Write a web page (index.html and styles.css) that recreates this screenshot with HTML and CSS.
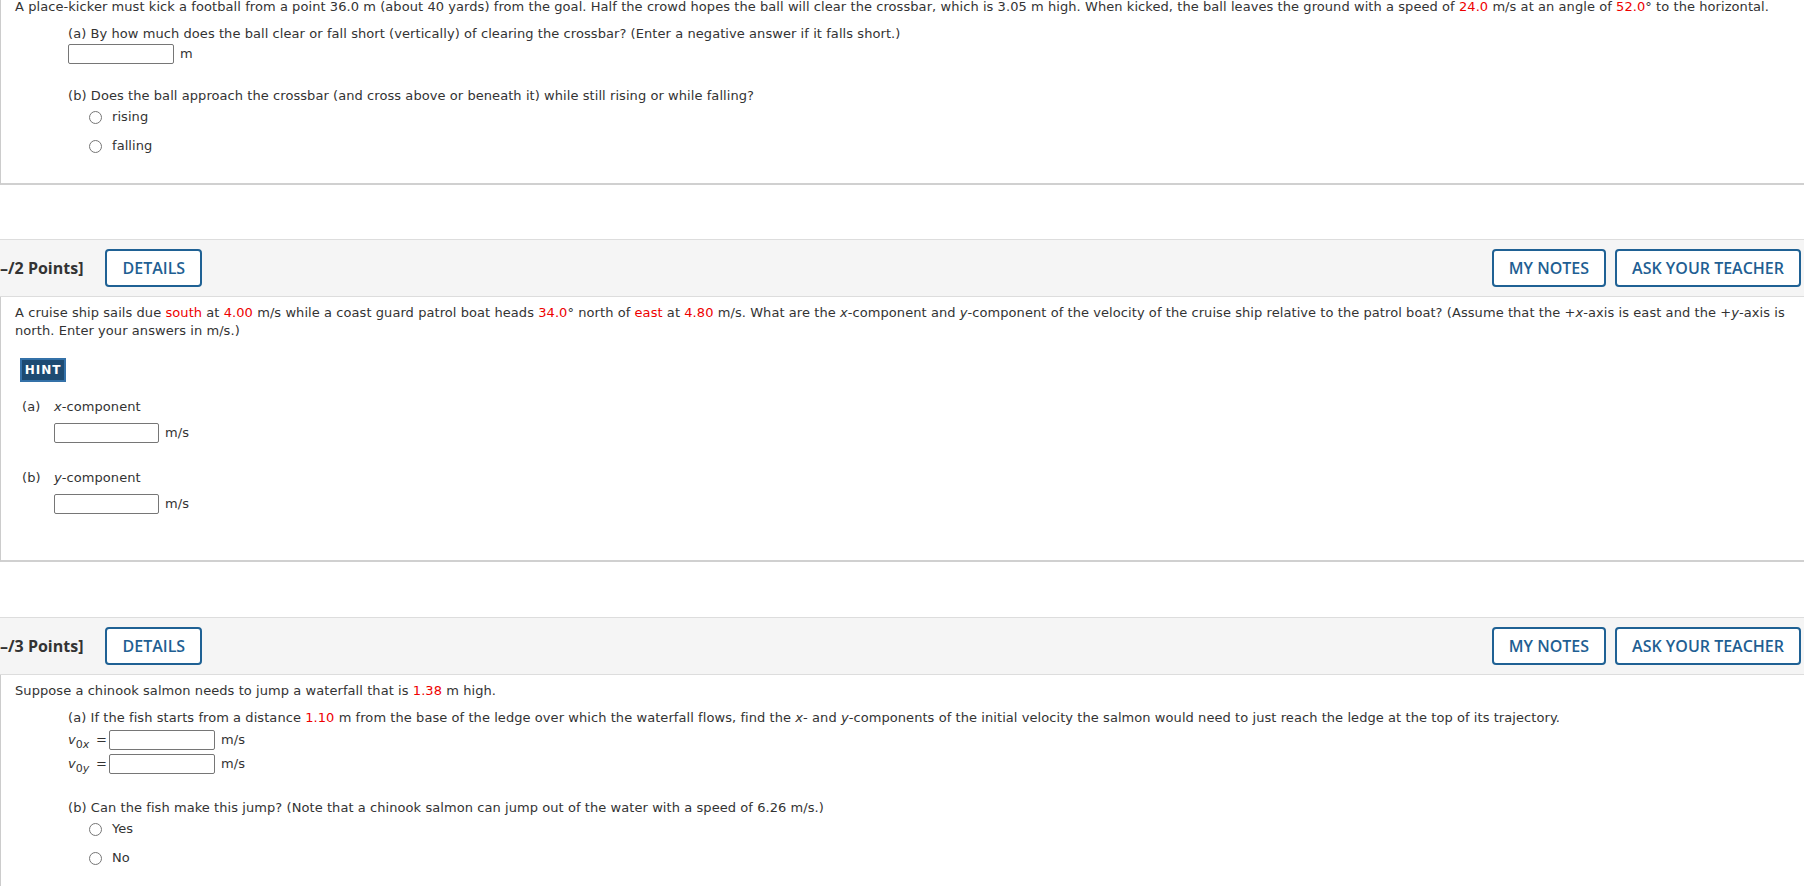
FILE: index.html
```html
<!DOCTYPE html>
<html lang="en">
<head>
<meta charset="utf-8">
<title>Assignment</title>
<link rel="stylesheet" href="styles.css">
</head>
<body>
<div class="page">

  <section class="question first">
    <div class="qbody q1body">
      <p class="stem">A place-kicker must kick a football from a point 36.0 m (about 40 yards) from the goal. Half the crowd hopes the ball will clear the crossbar, which is 3.05 m high. When kicked, the ball leaves the ground with a speed of <span class="red">24.0</span> m/s at an angle of <span class="red">52.0</span>° to the horizontal.</p>
      <div class="part">
        <p class="ptext">(a) By how much does the ball clear or fall short (vertically) of clearing the crossbar? (Enter a negative answer if it falls short.)</p>
        <div class="answer"><input class="field" type="text"><span class="unit">m</span></div>
      </div>
      <div class="part partb">
        <p class="ptext">(b) Does the ball approach the crossbar (and cross above or beneath it) while still rising or while falling?</p>
        <ul class="choices">
          <li><span class="radio"></span>rising</li>
          <li><span class="radio"></span>falling</li>
        </ul>
      </div>
    </div>
  </section>

  <section class="question">
    <header class="qhead">
      <span class="pts">–/2 Points]</span>
      <button class="btn">DETAILS</button>
      <span class="spacer"></span>
      <button class="btn">MY NOTES</button>
      <button class="btn">ASK YOUR TEACHER</button>
    </header>
    <div class="qbody q2body">
      <p class="stem">A cruise ship sails due <span class="red">south</span> at <span class="red">4.00</span> m/s while a coast guard patrol boat heads <span class="red">34.0</span>° north of <span class="red">east</span> at <span class="red">4.80</span> m/s. What are the <i>x</i>-component and <i>y</i>-component of the velocity of the cruise ship relative to the patrol boat? (Assume that the +<i>x</i>-axis is east and the +<i>y</i>-axis is north. Enter your answers in m/s.)</p>
      <div class="hintrow"><span class="hint">HINT</span></div>
      <div class="comp">
        <p class="clabel"><span class="cletter">(a)</span><i>x</i>-component</p>
        <div class="canswer"><input class="field" type="text"><span class="unit">m/s</span></div>
      </div>
      <div class="comp compb">
        <p class="clabel"><span class="cletter">(b)</span><i>y</i>-component</p>
        <div class="canswer"><input class="field" type="text"><span class="unit">m/s</span></div>
      </div>
    </div>
  </section>

  <section class="question">
    <header class="qhead">
      <span class="pts">–/3 Points]</span>
      <button class="btn">DETAILS</button>
      <span class="spacer"></span>
      <button class="btn">MY NOTES</button>
      <button class="btn">ASK YOUR TEACHER</button>
    </header>
    <div class="qbody q3body">
      <p class="stem">Suppose a chinook salmon needs to jump a waterfall that is <span class="red">1.38</span> m high.</p>
      <div class="part">
        <p class="ptext">(a) If the fish starts from a distance <span class="red">1.10</span> m from the base of the ledge over which the waterfall flows, find the <i>x</i>- and <i>y</i>-components of the initial velocity the salmon would need to just reach the ledge at the top of its trajectory.</p>
        <div class="vrow"><span class="vlabel"><i>v</i><sub>0<i>x</i></sub></span><span class="eq">=</span><input class="field" type="text"><span class="unit">m/s</span></div>
        <div class="vrow"><span class="vlabel"><i>v</i><sub>0<i>y</i></sub></span><span class="eq">=</span><input class="field" type="text"><span class="unit">m/s</span></div>
      </div>
      <div class="part partb3">
        <p class="ptext">(b) Can the fish make this jump? (Note that a chinook salmon can jump out of the water with a speed of 6.26 m/s.)</p>
        <ul class="choices choices3">
          <li><span class="radio"></span>Yes</li>
          <li><span class="radio"></span>No</li>
        </ul>
      </div>
    </div>
  </section>

</div>
</body>
</html>
```

FILE: styles.css
```css
html, body {
  margin: 0;
  padding: 0;
  background: #ffffff;
}

body {
  overflow: hidden;
  font-family: Verdana, "DejaVu Sans", sans-serif;
  font-size: 13px;
  line-height: 18px;
  letter-spacing: 0.07px;
  color: #333333;
}

.page {
  width: 1804px;
  margin-top: -2px;
}

p {
  margin: 0;
}

.red {
  color: #ee0000;
}

.question {
  margin-bottom: 55px;
}

.question.first {
  margin-bottom: 54px;
}

.qbody {
  border-left: 1px solid #cccccc;
  border-bottom: 2px solid #d0d0d0;
  padding-left: 14px;
}

.q1body {
  padding-top: 0;
  padding-bottom: 28px;
}

.part {
  margin-left: 53px;
  margin-top: 9px;
}

.partb {
  margin-top: 23px;
}

.answer {
  display: flex;
  align-items: center;
  margin-top: 1px;
}

.field {
  box-sizing: border-box;
  width: 106px;
  height: 20px;
  margin: 0;
  padding: 0 4px;
  border: 1px solid #767676;
  border-radius: 2px;
  background: #ffffff;
  font: inherit;
}

.unit {
  margin-left: 6px;
}

.choices {
  list-style: none;
  margin: 3px 0 0 21px;
  padding: 0;
  display: flex;
  flex-direction: column;
  gap: 11px;
}

.choices li {
  display: flex;
  align-items: center;
  height: 18px;
}

.radio {
  box-sizing: border-box;
  width: 13px;
  height: 13px;
  border: 1px solid #767676;
  border-radius: 50%;
  margin-right: 10px;
  background: #ffffff;
}

/* header bar */
.qhead {
  display: flex;
  align-items: center;
  background: #f5f5f5;
  border-top: 1px solid #dddddd;
  border-bottom: 1px solid #dddddd;
  padding: 9px 3px 9px 0;
}

.pts {
  font-family: "Open Sans", "Liberation Sans", sans-serif;
  font-weight: 700;
  font-size: 16px;
  letter-spacing: 0;
  color: #333333;
  margin-right: 22px;
}

.spacer {
  flex: 1;
}

.btn {
  box-sizing: border-box;
  height: 38px;
  padding: 0 15px;
  border: 2px solid #1f6194;
  border-radius: 4px;
  background: #ffffff;
  color: #1f5f93;
  font-family: "Open Sans", "Liberation Sans", sans-serif;
  font-size: 16px;
  font-weight: 600;
  letter-spacing: 0;
  cursor: pointer;
}

.btn + .btn {
  margin-left: 9px;
}

.spacer + .btn {
  margin-left: 0;
}

/* question 2 */
.q2body {
  padding-top: 7px;
  padding-bottom: 46px;
}

.hintrow {
  margin-top: 18px;
  margin-left: 5px;
  display: flex;
}

.hint {
  box-sizing: border-box;
  height: 24px;
  width: 46px;
  display: flex;
  align-items: center;
  justify-content: center;
  background: #1d4b72;
  border: 2px solid #3471a8;
  color: #ffffff;
  font-weight: 700;
  font-size: 12px;
  letter-spacing: 1px;
}

.comp {
  margin-top: 16px;
  margin-left: 7px;
}

.compb {
  margin-top: 26px;
}

.clabel {
  display: flex;
}

.cletter {
  width: 32px;
}

.canswer {
  display: flex;
  align-items: center;
  margin-left: 32px;
  margin-top: 7px;
}

.canswer .field {
  width: 105px;
}

/* question 3 */
.q3body {
  padding-top: 7px;
  padding-bottom: 40px;
}

.vrow {
  display: flex;
  align-items: center;
  height: 20px;
  margin-top: 3px;
}

.vrow + .vrow {
  margin-top: 4px;
}

.vlabel {
  width: 28px;
  font-size: 13px;
}

.vlabel sub {
  font-size: 11px;
  vertical-align: -4px;
  line-height: 0;
}

.eq {
  width: 13px;
}

.partb3 {
  margin-top: 25px;
}

.choices3 {
  gap: 11px;
}
```
